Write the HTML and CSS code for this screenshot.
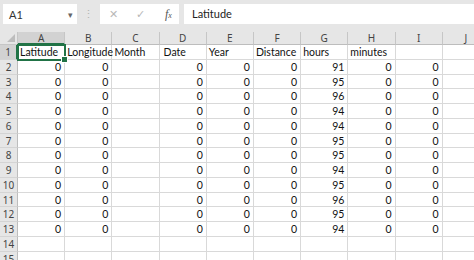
FILE: index.html
```html
<!doctype html>
<html lang="en">
<head>
  <meta charset="utf-8">
  <title>Book1 - Excel</title>
  <link rel="stylesheet" href="styles.css">
</head>
<body>

  <div class="formula-bar">
    <div class="name-box">
      <span>A1</span>
      <span class="drop">&#9662;</span>
    </div>
    <div class="dots">&#8942;</div>
    <div class="fx-box">
      <span class="fx-cancel">&#10005;</span>
      <span class="fx-ok">&#10003;</span>
      <span class="fx-label">f<small>x</small></span>
    </div>
    <div class="formula-input">Latitude</div>
  </div>

  <div class="sheet">
    <!-- column headers -->
    <div class="corner"></div>
    <div class="col-head active">A</div>
    <div class="col-head">B</div>
    <div class="col-head">C</div>
    <div class="col-head">D</div>
    <div class="col-head">E</div>
    <div class="col-head">F</div>
    <div class="col-head">G</div>
    <div class="col-head">H</div>
    <div class="col-head">I</div>
    <div class="col-head">J</div>

    <!-- row 1 -->
    <div class="row-head active">1</div>
    <div class="cell">Latitude</div>
    <div class="cell">Longitude</div>
    <div class="cell">Month</div>
    <div class="cell indent">Date</div>
    <div class="cell">Year</div>
    <div class="cell">Distance</div>
    <div class="cell">hours</div>
    <div class="cell">minutes</div>
    <div class="cell"></div>
    <div class="cell"></div>

    <div class="row-head">2</div>
    <div class="cell num">0</div><div class="cell num">0</div><div class="cell"></div><div class="cell num">0</div><div class="cell num">0</div>
    <div class="cell num">0</div><div class="cell num">91</div><div class="cell num">0</div><div class="cell num">0</div><div class="cell"></div>

    <div class="row-head">3</div>
    <div class="cell num">0</div><div class="cell num">0</div><div class="cell"></div><div class="cell num">0</div><div class="cell num">0</div>
    <div class="cell num">0</div><div class="cell num">95</div><div class="cell num">0</div><div class="cell num">0</div><div class="cell"></div>

    <div class="row-head">4</div>
    <div class="cell num">0</div><div class="cell num">0</div><div class="cell"></div><div class="cell num">0</div><div class="cell num">0</div>
    <div class="cell num">0</div><div class="cell num">96</div><div class="cell num">0</div><div class="cell num">0</div><div class="cell"></div>

    <div class="row-head">5</div>
    <div class="cell num">0</div><div class="cell num">0</div><div class="cell"></div><div class="cell num">0</div><div class="cell num">0</div>
    <div class="cell num">0</div><div class="cell num">94</div><div class="cell num">0</div><div class="cell num">0</div><div class="cell"></div>

    <div class="row-head">6</div>
    <div class="cell num">0</div><div class="cell num">0</div><div class="cell"></div><div class="cell num">0</div><div class="cell num">0</div>
    <div class="cell num">0</div><div class="cell num">94</div><div class="cell num">0</div><div class="cell num">0</div><div class="cell"></div>

    <div class="row-head">7</div>
    <div class="cell num">0</div><div class="cell num">0</div><div class="cell"></div><div class="cell num">0</div><div class="cell num">0</div>
    <div class="cell num">0</div><div class="cell num">95</div><div class="cell num">0</div><div class="cell num">0</div><div class="cell"></div>

    <div class="row-head">8</div>
    <div class="cell num">0</div><div class="cell num">0</div><div class="cell"></div><div class="cell num">0</div><div class="cell num">0</div>
    <div class="cell num">0</div><div class="cell num">95</div><div class="cell num">0</div><div class="cell num">0</div><div class="cell"></div>

    <div class="row-head">9</div>
    <div class="cell num">0</div><div class="cell num">0</div><div class="cell"></div><div class="cell num">0</div><div class="cell num">0</div>
    <div class="cell num">0</div><div class="cell num">94</div><div class="cell num">0</div><div class="cell num">0</div><div class="cell"></div>

    <div class="row-head">10</div>
    <div class="cell num">0</div><div class="cell num">0</div><div class="cell"></div><div class="cell num">0</div><div class="cell num">0</div>
    <div class="cell num">0</div><div class="cell num">95</div><div class="cell num">0</div><div class="cell num">0</div><div class="cell"></div>

    <div class="row-head">11</div>
    <div class="cell num">0</div><div class="cell num">0</div><div class="cell"></div><div class="cell num">0</div><div class="cell num">0</div>
    <div class="cell num">0</div><div class="cell num">96</div><div class="cell num">0</div><div class="cell num">0</div><div class="cell"></div>

    <div class="row-head">12</div>
    <div class="cell num">0</div><div class="cell num">0</div><div class="cell"></div><div class="cell num">0</div><div class="cell num">0</div>
    <div class="cell num">0</div><div class="cell num">95</div><div class="cell num">0</div><div class="cell num">0</div><div class="cell"></div>

    <div class="row-head">13</div>
    <div class="cell num">0</div><div class="cell num">0</div><div class="cell"></div><div class="cell num">0</div><div class="cell num">0</div>
    <div class="cell num">0</div><div class="cell num">94</div><div class="cell num">0</div><div class="cell num">0</div><div class="cell"></div>

    <div class="row-head">14</div>
    <div class="cell"></div><div class="cell"></div><div class="cell"></div><div class="cell"></div><div class="cell"></div>
    <div class="cell"></div><div class="cell"></div><div class="cell"></div><div class="cell"></div><div class="cell"></div>

    <div class="row-head">15</div>
    <div class="cell"></div><div class="cell"></div><div class="cell"></div><div class="cell"></div><div class="cell"></div>
    <div class="cell"></div><div class="cell"></div><div class="cell"></div><div class="cell"></div><div class="cell"></div>

    <!-- active cell outline -->
    <div class="selection"><div class="handle"></div></div>
  </div>

</body>
</html>
```

FILE: styles.css
```css
body {
  margin: 0;
  background: #ffffff;
  overflow: hidden;
  font-family: "Lato", "Liberation Sans", sans-serif;
}

.formula-bar {
  display: flex;
  align-items: center;
  height: 32px;
  padding-bottom: 8px;
  box-sizing: border-box;
  padding-top: 4px;
  background: #e6e6e6;
}

.name-box {
  display: flex;
  align-items: center;
  justify-content: space-between;
  margin-left: 3px;
  width: 74px;
  height: 20px;
  padding: 0 4px 0 6px;
  box-sizing: border-box;
  background: #ffffff;
  font-size: 11px;
  color: #333;
}

.name-box .drop {
  font-size: 9px;
  color: #666;
}

.dots {
  width: 23px;
  text-align: center;
  color: #b4b4b4;
  font-size: 11px;
}

.fx-box {
  display: flex;
  align-items: center;
  width: 79px;
  height: 20px;
  background: #ffffff;
  box-sizing: border-box;
  padding-left: 9px;
  color: #b8b8b8;
  font-size: 11px;
}

.fx-cancel {
  width: 27px;
}

.fx-ok {
  width: 29px;
}

.fx-label {
  font-family: "Liberation Serif", serif;
  font-style: italic;
  color: #555;
  font-size: 12px;
}

.fx-label small {
  font-size: 8px;
}

.formula-input {
  flex: 1;
  height: 20px;
  margin-left: 5px;
  padding-left: 8px;
  line-height: 20px;
  background: #ffffff;
  font-size: 11px;
  color: #222;
}

.sheet {
  position: relative;
  display: grid;
  grid-template-columns: 18px repeat(10, 47.2px);
  grid-template-rows: 13px repeat(15, 14.78px);
}

.corner {
  background: #e6e6e6;
  border-right: 1px solid #c6c6c6;
  border-bottom: 1px solid #c6c6c6;
  box-sizing: border-box;
  position: relative;
}

.corner::after {
  content: "";
  position: absolute;
  right: 2px;
  bottom: 2px;
  border-left: 8px solid transparent;
  border-bottom: 8px solid #bdbdbd;
}

.col-head,
.row-head {
  background: #e6e6e6;
  color: #444;
  font-size: 10px;
  text-align: center;
  box-sizing: border-box;
  font-family: "Noto Sans", sans-serif;
}

.col-head {
  line-height: 13px;
  border-right: 1px solid #c6c6c6;
  border-bottom: 1px solid #bdbdbd;
}

.row-head {
  line-height: 14px;
  border-right: 1px solid #bdbdbd;
  border-bottom: 1px solid #d4d4d4;
}

.col-head.active {
  background: #d2d2d2;
  border-bottom: 2px solid #217346;
}

.row-head.active {
  background: #d2d2d2;
  border-right: 2px solid #217346;
}

.cell {
  font-size: 10.5px;
  line-height: 14px;
  padding: 0 2px;
  color: #111;
  white-space: nowrap;
  overflow: visible;
  box-sizing: border-box;
  border-right: 1px solid #d9d9d9;
  border-bottom: 1px solid #d9d9d9;
}

.cell.num {
  text-align: right;
  padding-right: 3px;
}

.cell.indent {
  padding-left: 4px;
}

.selection {
  position: absolute;
  left: 17px;
  top: 12px;
  width: 49px;
  height: 17px;
  border: 2px solid #217346;
  box-sizing: border-box;
}

.handle {
  position: absolute;
  right: -4px;
  bottom: -4px;
  width: 5px;
  height: 5px;
  background: #217346;
  border: 1px solid #ffffff;
}
```
